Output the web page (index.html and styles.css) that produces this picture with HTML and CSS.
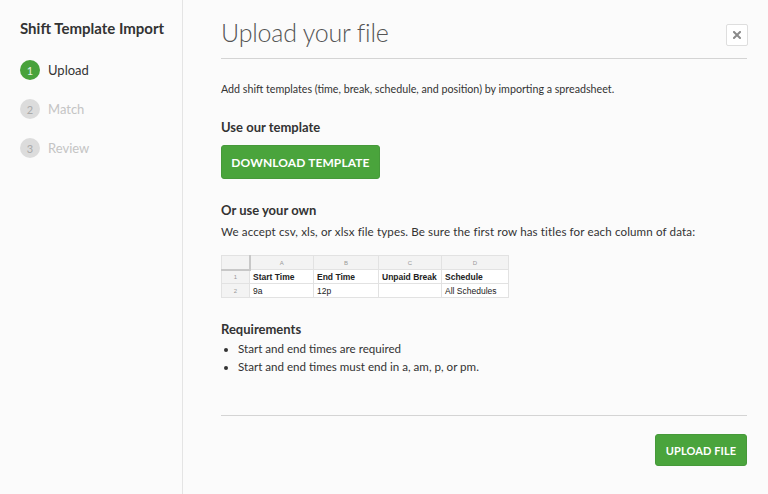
FILE: index.html
```html
<!DOCTYPE html>
<html>
<head>
<meta charset="utf-8">
<link rel="stylesheet" href="styles.css">
</head>
<body>
<div class="app">
  <aside class="sidebar">
    <h2 class="side-title">Shift Template Import</h2>
    <ol class="steps">
      <li class="step active"><span class="num">1</span><span class="label">Upload</span></li>
      <li class="step"><span class="num">2</span><span class="label">Match</span></li>
      <li class="step"><span class="num">3</span><span class="label">Review</span></li>
    </ol>
  </aside>
  <main class="main">
    <header class="header">
      <h1 class="title">Upload your file</h1>
      <button class="close" aria-label="Close">
        <svg width="8" height="8" viewBox="0 0 8 8"><path d="M1 1L7 7M7 1L1 7" stroke="#8a8a8a" stroke-width="2" stroke-linecap="square"/></svg>
      </button>
    </header>
    <section class="content">
      <p class="intro">Add shift templates (time, break, schedule, and position) by importing a spreadsheet.</p>
      <h3 class="sub">Use our template</h3>
      <button class="btn btn-download">DOWNLOAD TEMPLATE</button>
      <h3 class="sub sub-own">Or use your own</h3>
      <p class="accept">We accept csv, xls, or xlsx file types. Be sure the first row has titles for each column of data:</p>
      <table class="sheet">
        <tr class="colhead"><td class="corner"></td><td>A</td><td>B</td><td>C</td><td>D</td></tr>
        <tr><td class="rn">1</td><td class="b">Start Time</td><td class="b">End Time</td><td class="b">Unpaid Break</td><td class="b">Schedule</td></tr>
        <tr><td class="rn">2</td><td>9a</td><td>12p</td><td></td><td>All Schedules</td></tr>
      </table>
      <h3 class="sub sub-req">Requirements</h3>
      <ul class="reqs">
        <li>Start and end times are required</li>
        <li>Start and end times must end in a, am, p, or pm.</li>
      </ul>
    </section>
    <footer class="footer">
      <button class="btn btn-upload">UPLOAD FILE</button>
    </footer>
  </main>
</div>
</body>
</html>
```
FILE: styles.css
```css
* { box-sizing: border-box; }
html, body { margin: 0; padding: 0; }
body {
  background: #fbfbfb;
  font-family: "Lato", "Open Sans", sans-serif;
  color: #333;
}
.app { display: flex; height: 494px; }
.sidebar {
  width: 183px;
  flex: none;
  border-right: 1px solid #e4e4e4;
  padding: 19px 0 0 20px;
}
.side-title {
  margin: 0;
  font-size: 15px;
  font-weight: 700;
  color: #333;
  line-height: 18px;
}
.steps { list-style: none; margin: 23px 0 0; padding: 0; }
.step { display: flex; align-items: center; height: 20px; margin-bottom: 19px; }
.num {
  width: 20px; height: 20px; border-radius: 50%;
  background: #dcdcdc; color: #aaa;
  font-size: 11px; display: flex; align-items: center; justify-content: center;
  margin-right: 8px;
}
.label { font-size: 13px; color: #c4c4c4; }
.active .num { background: #48a23b; color: #e6f3e3; }
.active .label { color: #333; }

.main { flex: 1; padding: 0 21px 0 38px; display: flex; flex-direction: column; }
.header {
  display: flex; justify-content: space-between; align-items: center;
  height: 59px; border-bottom: 1px solid #d4d4d4;
}
.title {
  margin: 0; font-size: 25px; font-weight: 300; color: #555; letter-spacing: -0.2px;
  margin-top: 6px;
}
.close {
  width: 22px; height: 22px; border: 1px solid #dedede; border-radius: 2px;
  background: #fff; display: flex; align-items: center; justify-content: center; padding: 0;
  margin-top: 11px; margin-right: -1px;
}
.content { padding-top: 22px; flex: 1; }
.intro { margin: 0; font-size: 10.7px; color: #333; line-height: 16px; }
.accept { margin: 6px 0 0; font-size: 11.6px; letter-spacing: 0.12px; color: #333; line-height: 16px; }
.sub { margin: 0; font-size: 13px; font-weight: 700; color: #333; line-height: 16px; }
.intro + .sub { margin-top: 22px; }
.btn {
  background: #4aa43c; color: #fff; border: 1px solid #46993a; border-radius: 3px;
  font-family: inherit; font-weight: 700; font-size: 12px; letter-spacing: 0.1px;
}
.btn-download { margin-top: 10px; height: 34px; width: 159px; }
.sub-own { margin-top: 23px; }
.sheet {
  margin-top: 15px; border-collapse: collapse; font-family: "Liberation Sans", Arial, sans-serif;
  font-size: 8.5px; color: #222; background: #fff;
}
.sheet td { border: 1px solid #e2e2e2; height: 14px; padding: 0 3px; }
.sheet td:nth-child(2) { width: 64px; }
.sheet td:nth-child(3) { width: 65px; }
.sheet td:nth-child(4) { width: 63px; }
.sheet td:nth-child(5) { width: 67px; }
.sheet .colhead td { background: #f3f3f3; color: #999; text-align: center; font-size: 6px; }
.sheet .corner { width: 28px; border-right: 2px solid #c8c8c8; border-bottom: 2px solid #c8c8c8; }
.sheet .rn { background: #f3f3f3; color: #999; text-align: center; font-size: 6px; width: 28px; }
.sheet .b { font-weight: 700; }
.sub-req { margin-top: 23px; }
.reqs { margin: 3px 0 0; padding-left: 17px; font-size: 11.6px; line-height: 18px; color: #333; }
.footer {
  border-top: 1px solid #d4d4d4; height: 79px;
  display: flex; justify-content: flex-end; align-items: flex-start; padding-top: 18px;
}
.btn-upload { height: 32px; width: 92px; font-size: 11px; }
```
